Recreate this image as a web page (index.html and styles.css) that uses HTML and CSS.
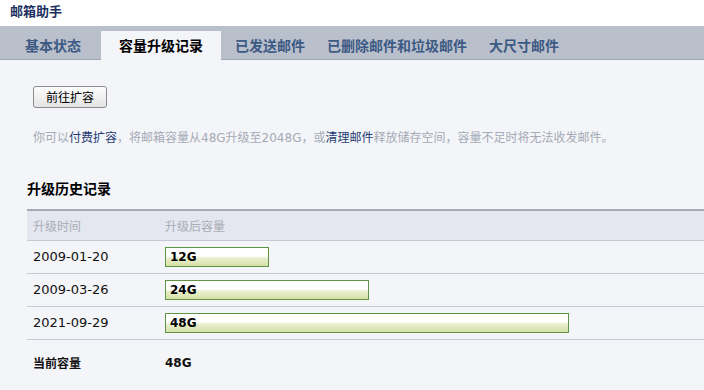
FILE: index.html
```html
<!DOCTYPE html>
<html lang="zh-CN">

<head>
    <meta charset="UTF-8">
    <meta name="viewport" content="width=device-width, initial-scale=1.0">
    <title>邮箱助手</title>
    <link rel="stylesheet" href="styles.css">
</head>

<body>

    <div class="title">邮箱助手</div>

    <div class="tabs">
        <a class="tab" href="#">基本状态</a>
        <a class="tab active" href="#">容量升级记录</a>
        <a class="tab" href="#">已发送邮件</a>
        <a class="tab" href="#">已删除邮件和垃圾邮件</a>
        <a class="tab" href="#">大尺寸邮件</a>
    </div>

    <div class="content">
        <button class="btn">前往扩容</button>

        <p class="tip">你可以<a href="#">付费扩容</a>，将邮箱容量从48G升级至2048G，或<a href="#">清理邮件</a>释放储存空间，容量不足时将无法收发邮件。</p>

        <h3 class="section-title">升级历史记录</h3>

        <table class="history">
            <thead>
                <tr>
                    <th class="col-date">升级时间</th>
                    <th>升级后容量</th>
                </tr>
            </thead>
            <tbody>
                <tr>
                    <td>2009-01-20</td>
                    <td><div class="bar" style="width: 104px;">12G</div></td>
                </tr>
                <tr>
                    <td>2009-03-26</td>
                    <td><div class="bar" style="width: 204px;">24G</div></td>
                </tr>
                <tr>
                    <td>2021-09-29</td>
                    <td><div class="bar" style="width: 404px;">48G</div></td>
                </tr>
            </tbody>
            <tfoot>
                <tr>
                    <td class="total-label">当前容量</td>
                    <td class="total-value">48G</td>
                </tr>
            </tfoot>
        </table>
    </div>

</body>

</html>
```

FILE: styles.css
```css
* {
    box-sizing: border-box;
}

body {
    margin: 0;
    background-color: #f4f5f8;
    font-family: "DejaVu Sans", "Noto Sans CJK SC", sans-serif;
    color: #111;
}

.title {
    height: 26px;
    padding: 3px 0 0 10px;
    background-color: #fff;
    font-family: "Noto Sans CJK SC", sans-serif;
    font-size: 13px;
    font-weight: bold;
    line-height: 16px;
    color: #1b2f5e;
}

.tabs {
    display: flex;
    align-items: flex-end;
    height: 34px;
    padding-left: 14px;
    background-color: #b9bfcb;
    border-bottom: 1px solid #a0a7b3;
}

.tab {
    height: 28px;
    padding: 0 11px;
    font-family: "Noto Sans CJK SC", sans-serif;
    font-size: 14px;
    font-weight: bold;
    line-height: 28px;
    color: #3c5a84;
    text-decoration: none;
    white-space: nowrap;
}

.tab.active {
    margin: 0 3px -1px 9px;
    padding: 0 18px;
    height: 29px;
    background-color: #f4f5f8;
    color: #000;
}

.content {
    padding: 26px 0 0 27px;
}

.btn {
    display: block;
    width: 74px;
    height: 22px;
    margin-left: 6px;
    padding: 0;
    border: 1px solid #8c8c8c;
    border-radius: 3px;
    background: linear-gradient(#fdfdfd, #e4e4e4);
    font-family: "Noto Sans CJK SC", sans-serif;
    font-size: 12px;
    line-height: 20px;
    color: #000;
}

.tip {
    margin: 21px 0 0 6px;
    font-size: 12px;
    line-height: 18px;
    color: #a4aab6;
    white-space: nowrap;
}

.tip a {
    color: #1e3c74;
    text-decoration: none;
}

.section-title {
    margin: 31px 0 0;
    font-family: "Noto Sans CJK SC", sans-serif;
    font-size: 14px;
    line-height: 20px;
    color: #000;
}

.history {
    width: 100%;
    margin-top: 11px;
    border-collapse: collapse;
    border-top: 2px solid #a6abb3;
}

.history th {
    height: 30px;
    padding: 0 0 0 6px;
    background-color: #e4e7f0;
    border-bottom: 1px solid #c6cad4;
    font-family: "Noto Sans CJK SC", sans-serif;
    font-size: 12px;
    font-weight: normal;
    text-align: left;
    color: #a8acb4;
}

.history .col-date {
    width: 132px;
}

.history td {
    height: 33px;
    padding: 0 0 0 6px;
    border-bottom: 1px solid #c6cad4;
    font-size: 13px;
    vertical-align: middle;
}

.bar {
    height: 20px;
    padding-left: 4px;
    border: 1px solid #5e9444;
    background: linear-gradient(#fff 0%, #fff 45%, #eaf0d0 55%, #d4e1a6 100%);
    font-size: 12px;
    font-weight: bold;
    line-height: 18px;
    color: #000;
}

.history tfoot td {
    height: 47px;
    border-bottom: none;
    font-size: 12px;
    font-weight: bold;
}

.total-label {
    font-family: "Noto Sans CJK SC", sans-serif;
}
```
